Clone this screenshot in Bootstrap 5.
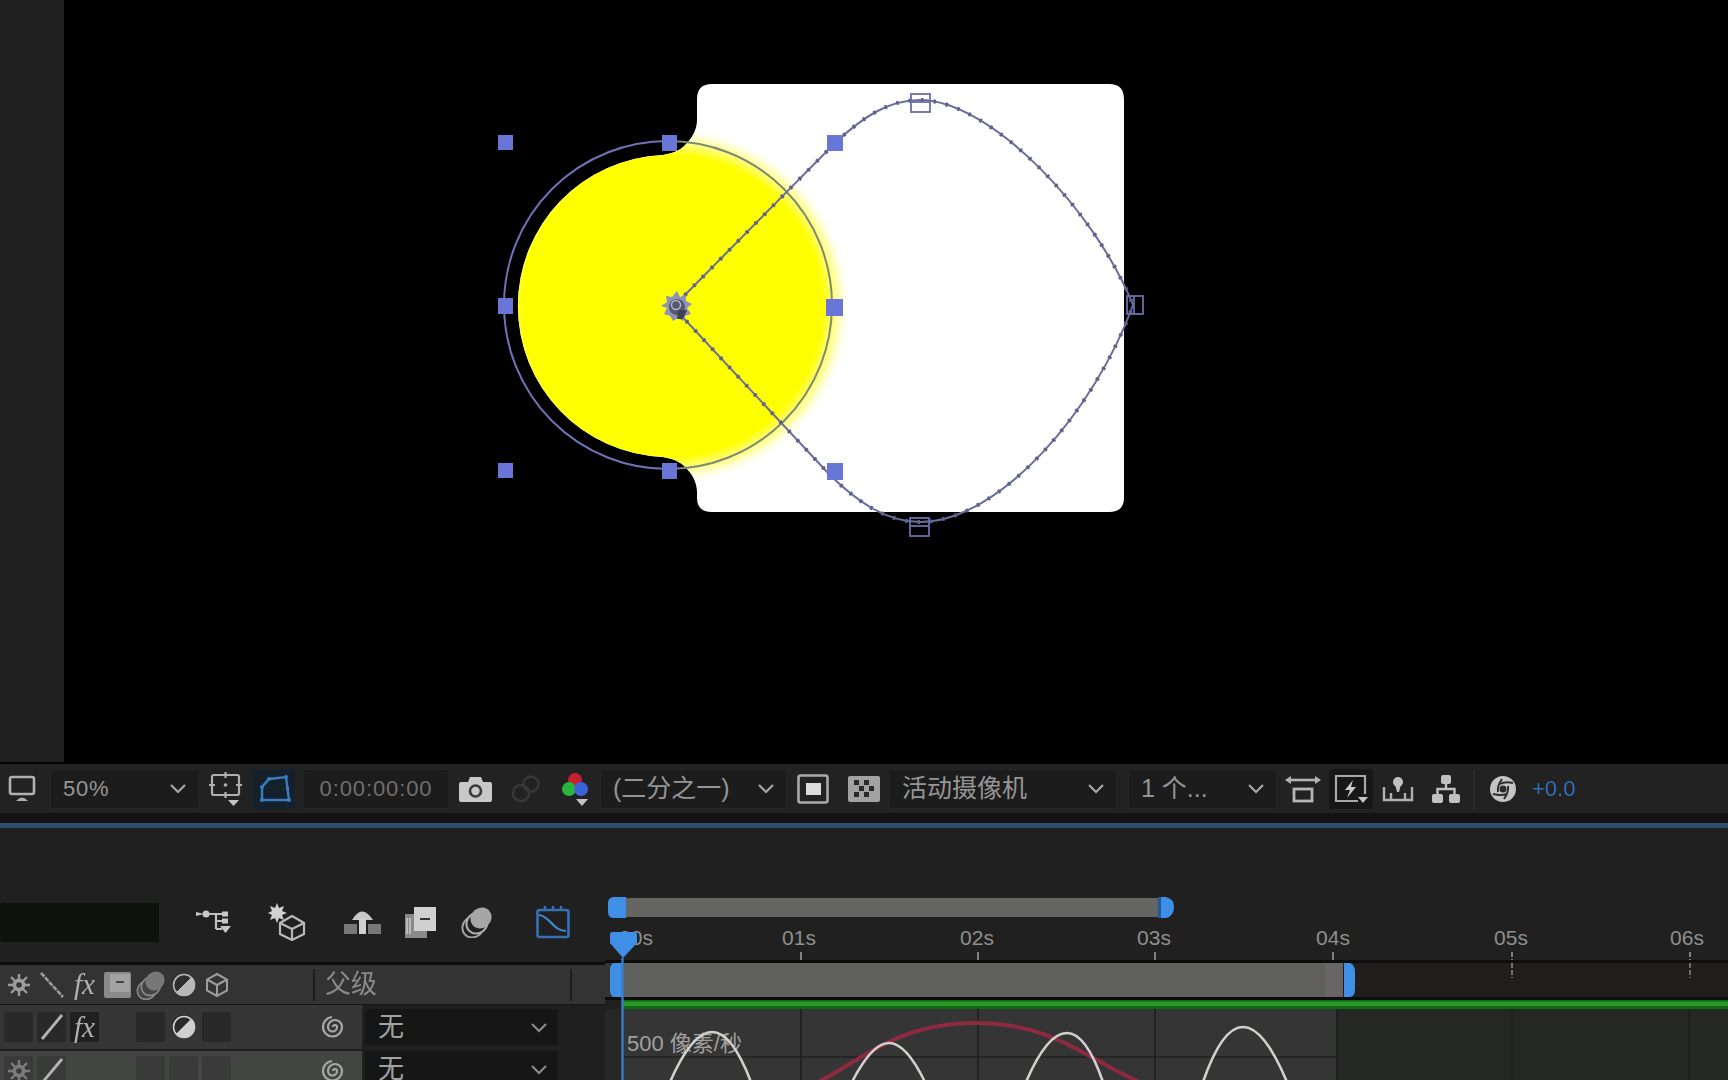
<!DOCTYPE html>
<html lang="zh">
<head>
<meta charset="utf-8">
<title>合成查看器</title>
<link href="https://cdn.jsdelivr.net/npm/bootstrap@5.3.0/dist/css/bootstrap.min.css" rel="stylesheet">
<style>
html,body{margin:0;height:1080px;overflow:hidden;background:#000}
body{font-family:"Liberation Sans","Noto Sans CJK SC",sans-serif;color:#969696}
.ae-root{width:1728px;height:1080px;overflow:hidden;filter:blur(.7px)}
.ae-viewer{height:764px;background:#000;flex:none}
.ae-side{width:64px;height:762px;background:#202020}
.ae-stage{display:block}
.ae-bar{height:49px;background:#222;flex:none}
.ae-cell{height:49px;flex:none}
.bw-mon{width:44px}.gap-mon{margin-right:6px}
.bw-box-a{width:149px}.bw-box-b{width:187px}.bw-box-c{width:228px}
.bw-54{width:54px}.bw-42{width:42px}.bw-148{width:148px}.bw-51{width:51px}.bw-50{width:50px}.bw-49{width:49px}.bw-52{width:52px}.bw-44{width:44px}.bw-46{width:46px}.bw-48{width:48px}
.gap-7{margin-left:7px}.gap-11{margin-left:11px}
.ae-combo.btn{height:40px;flex:none;background:#1c1c1c;border:1px solid #262626;border-radius:3px;color:#959595;font-size:25px;line-height:1;padding:0 11px 0 12px}
.ae-combo.num{font-size:22px;letter-spacing:.8px}
.ae-combo.time{justify-content:center;color:#6f6f6f;font-size:22px;letter-spacing:.9px;padding:0}
.ae-on{height:40px;flex:none;background:#171717;border-radius:3px}
.ae-on.blue{background:#14202c}
.ae-rule{width:2px;height:40px;background:#2a2a2a;margin:0 4px 0 4px;flex:none}
.ae-plus{color:#2f6fb8;font-size:22px;margin-left:5px}
.ae-strip{height:10px;background:#131313;flex:none}
.ae-blue{height:5px;background:#2f4f70;flex:none}
.ae-time{height:252px;flex:none;overflow:hidden}
.ae-left{width:605px;flex:none;height:252px;overflow:hidden;background:#1f1f1f}
.ae-tools{height:134px;flex:none;padding-top:54px;background:#202020}
.ae-search{width:159px;height:39px;background:#0f110f;border-radius:2px;flex:none}
.t1{margin-left:37px}.t2{margin-left:36px}.t3{margin-left:38px}.t4{margin-left:23px}.t5{margin-left:25px}.t6{margin-left:44px}
.ae-sep{height:3px;background:#0d0d0d;flex:none}
.ae-head{height:40px;flex:none;background:#333;padding-left:2px;border-bottom:1px solid #151515}
.ae-slot{width:33px;flex:none;display:flex;align-items:center;justify-content:center}
.ae-head .ae-slot{height:39px}
.ae-fx{font-family:"Liberation Serif",serif;font-style:italic;font-size:29px;color:#b0b0b0;line-height:1}
.ae-parent{width:80px;flex:none}
.ae-div{width:2px;height:32px;background:#1d1d1d;flex:none}
.ae-zh{font-size:26px;color:#8a8a8a;line-height:1.2;margin-left:10px;width:245px}
.ae-row{height:44px;flex:none;padding-left:0;background:#1f1f1f}
.ae-row .ae-slot{height:30px;border-radius:2px;margin:0}
.ae-rowfill{background:#363636;height:100%;width:362px;padding-left:2px;flex:none}
.ae-row.two .ae-rowfill{background:#434543}
.ae-row.two{height:40px;margin-top:2px}
.ae-well{background:#292929;width:29px!important;margin:0 2px!important}
.ae-row.two .ae-well{background:#393a39}
.ae-well.deep{background:#202020}
.ae-space{flex:1 1 auto}
.ae-sel{width:193px;height:36px;margin-left:3px;background:#161616;display:flex;align-items:center;justify-content:space-between;padding:0 10px 0 13px;color:#a2a2a2;font-size:26px;line-height:1;flex:none}
.ae-canvas{display:block}
</style>
</head>
<body>
<div class="ae-root d-flex flex-column">
  <div class="ae-viewer d-flex">
    <div class="ae-side"></div>
    <svg class="ae-stage" width="1664" height="764" viewBox="64 0 1664 764">
      <defs>
        <clipPath id="shapeClip"><path d="M712 84H1109Q1124 84 1124 99V498Q1124 512 1109 512H712Q697 512 697 498V492C697 484 693 475 687 469C683 464 676 459 663 457A151.120 151.120 0 0 1 663 155C676 153 683 148 687 143C693 137 697 128 697 120V99Q697 84 712 84Z"/></clipPath>
        <radialGradient id="sun" gradientUnits="userSpaceOnUse" cx="672" cy="306" r="177">
          <stop offset=".85" stop-color="#ffff00"/><stop offset=".92" stop-color="#ffff40" stop-opacity=".65"/><stop offset="1" stop-color="#ffffb0" stop-opacity="0"/>
        </radialGradient>
      </defs>
      <path fill="#fff" d="M712 84H1109Q1124 84 1124 99V498Q1124 512 1109 512H712Q697 512 697 498V492C697 484 693 475 687 469C683 464 676 459 663 457A151.120 151.120 0 0 1 663 155C676 153 683 148 687 143C693 137 697 128 697 120V99Q697 84 712 84Z"/>
      <rect x="490" y="120" width="370" height="370" fill="url(#sun)" clip-path="url(#shapeClip)"/>
      <!-- circle path -->
      <path d="M668 141A164 164 0 0 0 668 469" fill="none" stroke="#6f72b4" stroke-width="2"/>
      <path d="M668 141A164 164 0 0 1 668 469" fill="none" stroke="#7c8a78" stroke-width="2"/>
      <!-- eye path -->
      <path d="M676 304L835 143C865 115 890 100 920 100C990 100 1095 210 1133 305C1095 410 1000 522 920 522C885 522 855 500 828 473L676 310" fill="none" stroke="#6b6d9c" stroke-width="2"/>
      <path d="M676 304L835 143C865 115 890 100 920 100C990 100 1095 210 1133 305C1095 410 1000 522 920 522C885 522 855 500 828 473L676 310" fill="none" stroke="#5d6088" stroke-width="4" stroke-dasharray="2.500 10"/>
      <g fill="#6a75d8">
        <rect x="498" y="135" width="15" height="15"/><rect x="662" y="135" width="15" height="16"/><rect x="827" y="135" width="16" height="16"/>
        <rect x="498" y="298" width="15" height="16"/><rect x="826" y="299" width="17" height="17"/>
        <rect x="498" y="463" width="15" height="15"/><rect x="662" y="463" width="15" height="16"/><rect x="827" y="463" width="16" height="17"/>
      </g>
      <g fill="none" stroke="#6b6ea8" stroke-width="1.800">
        <rect x="911" y="94" width="19" height="18"/><path d="M911 102H930"/>
        <rect x="1127" y="296" width="16" height="18"/><path d="M1134 296V314"/>
        <rect x="910" y="518" width="19" height="18"/><path d="M910 526H929"/>
      </g>
      <g transform="translate(677 307)">
        <path d="M0-16L3-10L9-12L9-6L15-3L10 1L14 7L8 9L6 14L1 11L-4 14L-7 9L-13 7L-10 1L-16-1L-10-5L-11-11L-5-10Z" fill="#8f93b8"/>
        <circle r="8" fill="#54596f"/><circle r="4.500" cx="-1" cy="-2" fill="none" stroke="#b4b6c8" stroke-width="1.400"/>
        <path d="M1 3H10L6 12H0Z" fill="#3e4254"/>
      </g>
    </svg>
  </div>

  <div class="ae-bar d-flex align-items-center">
    <div class="ae-cell bw-mon gap-mon d-flex align-items-center justify-content-center">
      <svg width="28" height="27" viewBox="0 0 28 27"><rect x="2" y="2" width="24" height="17" rx="2" fill="none" stroke="#b0b0b0" stroke-width="2.600"/><path d="M8 26Q14 19 20 26Z" fill="#b0b0b0"/></svg>
    </div>
    <button class="btn ae-combo num bw-box-a d-flex align-items-center justify-content-between">50%<svg width="18" height="11" viewBox="0 0 18 11"><path d="M2 2L9 9L16 2" fill="none" stroke="#a8a8a8" stroke-width="2.200"/></svg></button>
    <div class="ae-cell bw-54 d-flex align-items-center justify-content-center">
      <svg width="36" height="36" viewBox="0 0 36 36"><rect x="4" y="4" width="27" height="20" rx="2" fill="none" stroke="#b0b0b0" stroke-width="2.200"/><path d="M17.500 1V7M17.500 21V27M1 14H7M28 14H34" stroke="#b0b0b0" stroke-width="2.200"/><circle cx="17.500" cy="14" r="1.800" fill="#b0b0b0"/><path d="M20 29H31L25.500 35Z" fill="#c4c4c4"/></svg>
    </div>
    <div class="ae-on blue bw-42 d-flex align-items-center justify-content-center">
      <svg width="36" height="30" viewBox="0 0 36 30"><path d="M13 5L30 3L33 26L6 26L6 13Z" fill="none" stroke="#3a7cc0" stroke-width="2.400"/><g fill="#3a7cc0"><circle cx="13" cy="5" r="2"/><circle cx="30" cy="3" r="2"/><circle cx="33" cy="26" r="2"/><circle cx="6" cy="26" r="2"/><circle cx="6" cy="13" r="2"/><circle cx="31.500" cy="14" r="1.800"/></g></svg>
    </div>
    <button class="btn ae-combo time bw-148 gap-7 d-flex align-items-center">0:00:00:00</button>
    <div class="ae-cell bw-51 d-flex align-items-center justify-content-center">
      <svg width="33" height="26" viewBox="0 0 33 26"><path d="M2 6H9L11 1H22L24 6H31Q33 6 33 8V24Q33 26 31 26H2Q0 26 0 24V8Q0 6 2 6Z" fill="#c8c8c8"/><circle cx="16.500" cy="15" r="5.500" fill="none" stroke="#3a3a3a" stroke-width="2.600"/></svg>
    </div>
    <div class="ae-cell bw-50 d-flex align-items-center justify-content-center">
      <svg width="32" height="30" viewBox="0 0 32 30"><circle cx="11" cy="19" r="8" fill="none" stroke="#383838" stroke-width="2.400"/><circle cx="21" cy="10" r="7.500" fill="none" stroke="#383838" stroke-width="2.400"/></svg>
    </div>
    <div class="ae-cell bw-49 d-flex align-items-center justify-content-center">
      <svg width="30" height="36" viewBox="0 0 30 36"><circle cx="14" cy="9" r="7" fill="#c82030"/><circle cx="8" cy="18" r="7" fill="#27b53a"/><circle cx="20" cy="18" r="7" fill="#3c64d8"/><path d="M15 28H27L21 35Z" fill="#c4c4c4"/></svg>
    </div>
    <button class="btn ae-combo bw-box-b d-flex align-items-center justify-content-between"><span>(二分之一)</span><svg width="18" height="11" viewBox="0 0 18 11"><path d="M2 2L9 9L16 2" fill="none" stroke="#a8a8a8" stroke-width="2.200"/></svg></button>
    <div class="ae-cell bw-51 d-flex align-items-center justify-content-center">
      <svg width="32" height="30" viewBox="0 0 32 30"><rect x="1.500" y="1.500" width="29" height="27" rx="2" fill="none" stroke="#aaa" stroke-width="2.600"/><rect x="9" y="9" width="15" height="12" fill="#dcdcdc"/></svg>
    </div>
    <div class="ae-cell bw-51 d-flex align-items-center justify-content-center">
      <svg width="32" height="26" viewBox="0 0 32 26"><rect x="1" y="1" width="30" height="24" rx="1" fill="#a2a2a2" stroke="#a2a2a2" stroke-width="2"/><g fill="#2a2a2a"><rect x="6" y="4" width="5" height="5"/><rect x="16" y="4" width="5" height="5"/><rect x="11" y="10" width="5" height="5"/><rect x="21" y="10" width="5" height="5"/><rect x="6" y="16" width="5" height="5"/><rect x="16" y="16" width="5" height="5"/></g></svg>
    </div>
    <button class="btn ae-combo bw-box-c d-flex align-items-center justify-content-between">活动摄像机<svg width="18" height="11" viewBox="0 0 18 11"><path d="M2 2L9 9L16 2" fill="none" stroke="#a8a8a8" stroke-width="2.200"/></svg></button>
    <button class="btn ae-combo bw-box-a gap-11 d-flex align-items-center justify-content-between"><span>1 个...</span><svg width="18" height="11" viewBox="0 0 18 11"><path d="M2 2L9 9L16 2" fill="none" stroke="#a8a8a8" stroke-width="2.200"/></svg></button>
    <div class="ae-cell bw-52 d-flex align-items-center justify-content-center">
      <svg width="36" height="28" viewBox="0 0 36 28"><path d="M4 5H32" stroke="#b4b4b4" stroke-width="2.600"/><path d="M0 5L6 1V9ZM36 5L30 1V9Z" fill="#b4b4b4"/><rect x="9" y="14" width="18" height="12" fill="none" stroke="#b4b4b4" stroke-width="2.800"/></svg>
    </div>
    <div class="ae-on bw-44 d-flex align-items-center justify-content-center">
      <svg width="34" height="30" viewBox="0 0 34 30"><path d="M24 27H2V2H31V20" fill="none" stroke="#a8a8a8" stroke-width="2.200"/><path d="M19 6L11 16H16L13 24L22 13H17Z" fill="#c8c8c8"/><path d="M24 23H34L29 29Z" fill="#c4c4c4"/></svg>
    </div>
    <div class="ae-cell bw-50 d-flex align-items-center justify-content-center">
      <svg width="32" height="26" viewBox="0 0 32 26"><circle cx="16" cy="6" r="5" fill="#c0c0c0"/><path d="M13 8H19L17 16H15Z" fill="#c0c0c0"/><path d="M2 11V24H30V11M9 17V24M23 17V24" fill="none" stroke="#b0b0b0" stroke-width="2.400"/></svg>
    </div>
    <div class="ae-cell bw-46 d-flex align-items-center justify-content-center">
      <svg width="30" height="30" viewBox="0 0 30 30"><rect x="10" y="1" width="10" height="9" rx="2" fill="#c0c0c0"/><rect x="1" y="20" width="11" height="9" rx="2" fill="#c0c0c0"/><rect x="18" y="20" width="11" height="9" rx="2" fill="#c0c0c0"/><path d="M15 9V15M6.500 21V15H23.500V21" fill="none" stroke="#c0c0c0" stroke-width="2.400"/></svg>
    </div>
    <div class="ae-rule"></div>
    <div class="ae-cell bw-48 d-flex align-items-center justify-content-center">
      <svg width="28" height="28" viewBox="0 0 28 28"><circle cx="14" cy="14" r="13" fill="#c4c4c4"/><g fill="none" stroke="#2c2c2c" stroke-width="2"><path d="M11 9Q16 6 24 8"/><path d="M19 11Q20 17 15 24"/><path d="M18 19Q12 21 4 19"/><path d="M9 17Q8 11 13 4"/></g><circle cx="14" cy="14" r="3.500" fill="#2a2a2a"/></svg>
    </div>
    <span class="ae-plus">+0.0</span>
  </div>
  <div class="ae-strip"></div>
  <div class="ae-blue"></div>

  <div class="ae-time d-flex">
    <div class="ae-left d-flex flex-column">
      <div class="ae-tools d-flex align-items-center">
        <div class="ae-search"></div>
        <svg class="t1" width="36" height="26" viewBox="0 0 36 26"><circle cx="10" cy="5" r="3.500" fill="#c8c8c8"/><path d="M0 3L8 5L0 7Z" fill="#c8c8c8"/><path d="M13 5H28M20 5V20M20 12H28M20 20H26" stroke="#c0c0c0" stroke-width="2.200" fill="none"/><rect x="26" y="2.500" width="6" height="5" fill="#c8c8c8"/><rect x="26" y="9.500" width="6" height="5" fill="#c8c8c8"/><path d="M24 17H35L29.500 24Z" fill="#c8c8c8"/></svg>
        <svg class="t2" width="38" height="38" viewBox="0 0 38 38"><path d="M9 0L11 5L16 3L14 8L19 10L14 12L16 17L11 15L9 20L7 15L2 17L4 12L0 10L4 8L2 3L7 5Z" fill="#d2d2d2"/><path d="M24 13L36 20V31L24 37L12 31V20Z M12 20L24 26L36 20M24 26V37" fill="#202020" stroke="#b8b8b8" stroke-width="2.200"/></svg>
        <svg class="t3" width="37" height="26" viewBox="0 0 37 26"><path d="M8 11Q18-6 29 11Z" fill="#c8c8c8"/><rect x="15" y="9" width="7" height="16" fill="#d0d0d0"/><path d="M0 15H13V25H24V15H37V25H0Z" fill="#787878"/></svg>
        <svg class="t4" width="32" height="32" viewBox="0 0 32 32"><rect x="1" y="8" width="22" height="24" fill="#8a8a8a"/><rect x="10" y="1" width="22" height="24" fill="#d0d0d0"/><path d="M16 13H26" stroke="#333" stroke-width="2"/><path d="M3 12V28M6 12V28" stroke="#dadada" stroke-width="1.200"/></svg>
        <svg class="t5" width="31" height="32" viewBox="0 0 31 32"><ellipse cx="12" cy="21" rx="11" ry="10" transform="rotate(-40 12 21)" fill="none" stroke="#a2a2a2" stroke-width="2"/><ellipse cx="16" cy="17" rx="11" ry="10" transform="rotate(-40 16 17)" fill="#202020" stroke="#b0b0b0" stroke-width="2"/><ellipse cx="20" cy="12" rx="11" ry="10" transform="rotate(-40 20 12)" fill="#a6a6a6"/></svg>
        <svg class="t6" width="34" height="34" viewBox="0 0 34 34"><rect x="1.500" y="5" width="31" height="27" rx="2" fill="none" stroke="#3372b8" stroke-width="2.600"/><path d="M9 1V6M17 1V6M25 1V6" stroke="#3372b8" stroke-width="2.400"/><path d="M3 10C14 11 17 26 30 26" fill="none" stroke="#3f85cf" stroke-width="2.200"/></svg>
      </div>
      <div class="ae-sep"></div>
      <div class="ae-head d-flex align-items-center">
        <div class="ae-slot"><svg width="22" height="22" viewBox="0 0 22 22"><g stroke="#9c9c9c" stroke-width="2.400"><path d="M11 0V22M0 11H22M3 3L19 19M19 3L3 19"/></g><circle cx="11" cy="11" r="6.500" fill="#9c9c9c"/><circle cx="11" cy="11" r="2.800" fill="#333"/></svg></div>
        <div class="ae-slot"><svg width="24" height="26" viewBox="0 0 24 26"><path d="M1 1L23 25" stroke="#9c9c9c" stroke-width="2.600" stroke-dasharray="5 1"/></svg></div>
        <div class="ae-slot"><span class="ae-fx">fx</span></div>
        <div class="ae-slot"><svg width="28" height="26" viewBox="0 0 28 26"><rect x="0" y="0" width="27" height="26" rx="2" fill="#8a8a8a"/><rect x="6" y="2" width="20" height="18" fill="#a2a2a2"/><path d="M12 10H20" stroke="#444" stroke-width="2"/></svg></div>
        <div class="ae-slot"><svg width="30" height="30" viewBox="0 0 30 30"><ellipse cx="11" cy="20" rx="10" ry="9" transform="rotate(-40 11 20)" fill="#454545" stroke="#8a8a8a" stroke-width="1.600"/><ellipse cx="15" cy="16" rx="10" ry="9" transform="rotate(-40 15 16)" fill="#444" stroke="#8a8a8a" stroke-width="1.600"/><ellipse cx="19" cy="11" rx="10" ry="9" transform="rotate(-40 19 11)" fill="#777"/></svg></div>
        <div class="ae-slot"><svg width="24" height="24" viewBox="0 0 24 24"><circle cx="12" cy="12" r="11" fill="#b8b8b8"/><path d="M3 20L20 3A11 11 0 0 0 3 20Z" fill="#2e2e2e" stroke="#2e2e2e"/><circle cx="12" cy="12" r="10.500" fill="none" stroke="#b8b8b8" stroke-width="1.600"/></svg></div>
        <div class="ae-slot"><svg width="26" height="26" viewBox="0 0 26 26"><path d="M13 2L23 7.500V18.500L13 24L3 18.500V7.500Z M3 7.500L13 13L23 7.500M13 13V24" fill="none" stroke="#9c9c9c" stroke-width="2"/></svg></div>
        <div class="ae-parent"></div>
        <div class="ae-div"></div>
        <div class="ae-zh">父级</div>
        <div class="ae-div"></div>
      </div>
      <div class="ae-row d-flex align-items-stretch">
        <div class="ae-rowfill d-flex align-items-center">
          <div class="ae-slot ae-well"></div>
          <div class="ae-slot ae-well"><svg width="24" height="26" viewBox="0 0 24 26"><path d="M2 25L22 1" stroke="#b4b4b4" stroke-width="2.800"/></svg></div>
          <div class="ae-slot ae-well deep"><span class="ae-fx">fx</span></div>
          <div class="ae-slot"></div>
          <div class="ae-slot ae-well"></div>
          <div class="ae-slot"><svg width="24" height="24" viewBox="0 0 24 24"><circle cx="12" cy="12" r="11" fill="#d0d0d0"/><path d="M3 20L20 3A11 11 0 0 0 3 20Z" fill="#2a2a2a"/><circle cx="12" cy="12" r="10.500" fill="none" stroke="#d0d0d0" stroke-width="1.600"/></svg></div>
          <div class="ae-slot ae-well"></div>
          <div class="ae-space"></div>
          <svg class="me-3" width="26" height="26" viewBox="0 0 26 26"><path d="M13 13A2 2 0 0 1 17 13A4.500 4.500 0 0 1 8 13A7 7 0 0 1 22 13A9.500 9.500 0 0 1 3 13A10 10 0 0 1 12 3" fill="none" stroke="#a8a8a8" stroke-width="2.200"/></svg>
        </div>
        <div class="ae-sel align-self-center">无<svg width="18" height="11" viewBox="0 0 18 11"><path d="M2 2L9 9L16 2" fill="none" stroke="#8c8c8c" stroke-width="2"/></svg></div>
      </div>
      <div class="ae-row two d-flex align-items-stretch">
        <div class="ae-rowfill d-flex align-items-center">
          <div class="ae-slot ae-well"><svg width="22" height="22" viewBox="0 0 22 22"><g stroke="#7c7c7c" stroke-width="2.400"><path d="M11 0V22M0 11H22M3 3L19 19M19 3L3 19"/></g><circle cx="11" cy="11" r="6.500" fill="#7c7c7c"/><circle cx="11" cy="11" r="2.800" fill="#3b3b3b"/></svg></div>
          <div class="ae-slot ae-well"><svg width="24" height="26" viewBox="0 0 24 26"><path d="M2 25L22 1" stroke="#b4b4b4" stroke-width="2.800"/></svg></div>
          <div class="ae-slot"></div>
          <div class="ae-slot"></div>
          <div class="ae-slot ae-well"></div>
          <div class="ae-slot ae-well"></div>
          <div class="ae-slot ae-well"></div>
          <div class="ae-space"></div>
          <svg class="me-3" width="26" height="26" viewBox="0 0 26 26"><path d="M13 13A2 2 0 0 1 17 13A4.500 4.500 0 0 1 8 13A7 7 0 0 1 22 13A9.500 9.500 0 0 1 3 13A10 10 0 0 1 12 3" fill="none" stroke="#a8a8a8" stroke-width="2.200"/></svg>
        </div>
        <div class="ae-sel align-self-start">无<svg width="18" height="11" viewBox="0 0 18 11"><path d="M2 2L9 9L16 2" fill="none" stroke="#8c8c8c" stroke-width="2"/></svg></div>
      </div>
    </div>
    <svg class="ae-canvas flex-shrink-0" width="1123" height="252" viewBox="605 828 1123 252" font-family="Liberation Sans, Noto Sans CJK SC, sans-serif">
      <rect x="605" y="828" width="1123" height="252" fill="#202020"/>
      <!-- work area -->
      <rect x="616" y="898" width="548" height="19" fill="#656563"/>
      <path d="M626 897V918H614Q608 918 608 912V903Q608 897 614 897Z" fill="#3f8fe6"/>
      <path d="M1158 897H1166Q1174 899 1174 907Q1174 916 1166 918H1158Z" fill="#3f8fe6"/>
      <path d="M1158 897H1161V918H1158Z" fill="#1f5a9e"/>
      <!-- ruler -->
      <g fill="#8f8f8f" font-size="21" text-anchor="middle">
        <text x="636" y="945">00s</text><text x="799" y="945">01s</text><text x="977" y="945">02s</text><text x="1154" y="945">03s</text><text x="1333" y="945">04s</text><text x="1511" y="945">05s</text><text x="1687" y="945">06s</text>
      </g>
      <g stroke="#9a9a9a" stroke-width="1.600">
        <path d="M801 952V963M978 952V963M1155 952V963M1333 952V963"/>
        <path d="M1512 952V978M1690 952V978" stroke-dasharray="5 2"/>
      </g>
      <!-- layer row -->
      <rect x="605" y="960" width="1123" height="3" fill="#0d0d0d"/>
      <rect x="605" y="963" width="7" height="35" fill="#333"/>
      <rect x="612" y="963" width="731" height="34" fill="#5f605e"/>
      <rect x="1325" y="963" width="18" height="34" fill="#696567"/>
      <rect x="1343" y="963" width="385" height="34" fill="#1f1e1c"/>
      <path d="M1512 963V978M1690 963V978" stroke="#858585" stroke-width="1.600" stroke-dasharray="5 2"/>
      <path d="M622 963V997H616Q610 997 610 991V969Q610 963 616 963Z" fill="#3f8fe6"/>
      <path d="M1344 963H1350Q1355 965 1355 972V990Q1355 996 1350 997H1344Z" fill="#3f8fe6"/>
      <rect x="605" y="997" width="1123" height="3" fill="#0d0d0d"/>
      <rect x="622" y="1000" width="1106" height="9" fill="#116a11"/>
      <rect x="622" y="1001.500" width="1106" height="4.500" fill="#2b9a2b"/>
      <!-- graph -->
      <rect x="605" y="1009" width="17" height="71" fill="#262626"/>
      <rect x="622" y="1009" width="714" height="71" fill="#353535"/>
      <rect x="1336" y="1009" width="392" height="71" fill="#252725"/>
      <path d="M622 1057H1728" stroke="#262626" stroke-width="2"/>
      <path d="M801 1009V1080M978 1009V1080M1155 1009V1080M1337 1009V1080M1512 1009V1080M1689 1009V1080" stroke="#1f1f1f" stroke-width="1.600"/>
      <text x="627" y="1051" font-size="22" fill="#a0a0a0">500 像素/秒</text>
      <path d="M818 1082C860 1062 895 1023 976 1023C1056 1023 1090 1062 1140 1082" fill="none" stroke="#8e2a40" stroke-width="4"/>
      <g fill="none" stroke="#d0d0cc" stroke-width="2.600">
        <path d="M670 1082Q692 1032 712 1032Q732 1032 751 1082"/>
        <path d="M852 1082Q872 1043 889 1043Q906 1043 925 1082"/>
        <path d="M1026 1082Q1047 1033 1067 1033Q1086 1033 1103 1082"/>
        <path d="M1203 1082Q1222 1027 1243 1027Q1264 1027 1287 1082"/>
      </g>
      <!-- playhead -->
      <path d="M622.500 958V1080" stroke="#3a7cc4" stroke-width="2.400"/>
      <path d="M612 932H634Q637 932 637 935V943L623 958L610 943V935Q610 932 612 932Z" fill="#3f8fe6"/>
    </svg>
  </div>
</div>
</body>
</html>
